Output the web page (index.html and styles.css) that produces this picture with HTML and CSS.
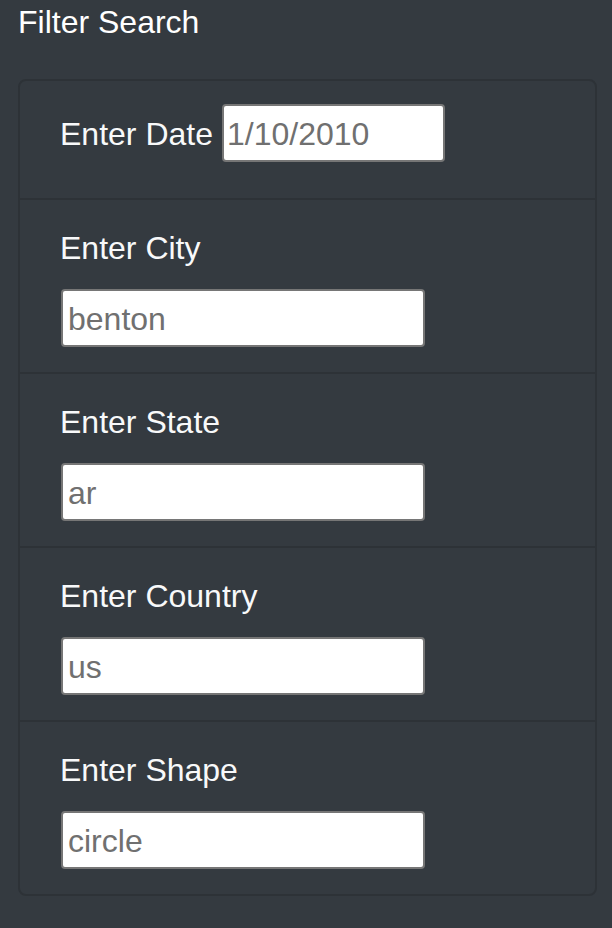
FILE: index.html
```html
<!DOCTYPE html>
<html lang="en">
<head>
<meta charset="utf-8">
<title>Filter Search</title>
<link rel="stylesheet" href="styles.css">
</head>
<body>
<div class="page">
  <h1 class="title">Filter Search</h1>
  <ul class="filters">
    <li class="filter filter-inline">
      <label class="label" for="datetime">Enter Date</label>
      <input class="input input-date" id="datetime" type="text" value="1/10/2010">
    </li>
    <li class="filter">
      <label class="label" for="city">Enter City</label>
      <input class="input" id="city" type="text" value="benton">
    </li>
    <li class="filter">
      <label class="label" for="state">Enter State</label>
      <input class="input" id="state" type="text" value="ar">
    </li>
    <li class="filter">
      <label class="label" for="country">Enter Country</label>
      <input class="input" id="country" type="text" value="us">
    </li>
    <li class="filter">
      <label class="label" for="shape">Enter Shape</label>
      <input class="input" id="shape" type="text" value="circle">
    </li>
  </ul>
</div>
</body>
</html>
```
FILE: styles.css
```css
html, body {
  margin: 0;
  padding: 0;
  background: #343a40;
}

body {
  font-family: "Liberation Sans", Arial, sans-serif;
  color: #f8f9fa;
}

.page {
  padding: 0 15px 0 18px;
}

.title {
  margin: 4px 0 0 0;
  font-size: 32px;
  line-height: 36px;
  font-weight: normal;
  color: #ffffff;
}

.filters {
  list-style: none;
  margin: 39px 0 0 0;
  padding: 0;
  border: 2px solid #2d3237;
  border-radius: 8px;
}

.filter {
  display: flex;
  flex-direction: column;
  align-items: flex-start;
  padding: 30px 39px 25px 40px;
  border-top: 2px solid #2d3237;
}

.filter:first-child {
  border-top: none;
}

.filter-inline {
  flex-direction: row;
  align-items: baseline;
  gap: 9px;
  padding: 23px 39px 36px 40px;
}

.label {
  display: block;
  font-size: 32px;
  line-height: 36px;
  color: #f8f9fa;
}

.input {
  box-sizing: border-box;
  width: 364px;
  height: 58px;
  margin: 23px 0 0 1px;
  padding: 3px 4px 0 5px;
  border: 2px solid #767676;
  border-radius: 4px;
  background: #ffffff;
  font-family: "Liberation Sans", Arial, sans-serif;
  font-size: 32px;
  color: #707070;
  outline: none;
}

.input-date {
  width: 223px;
  margin: 0;
  padding-left: 3px;
}
```
